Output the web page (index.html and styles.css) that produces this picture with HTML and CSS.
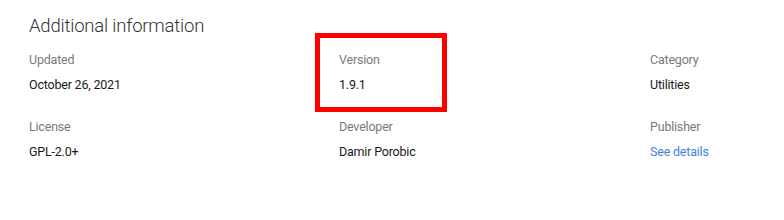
FILE: index.html
```html
<!DOCTYPE html>
<html lang="en">

<head>
	<meta charset="utf-8" />
	<title>Additional information</title>
	<link rel="stylesheet" href="styles.css">
</head>

<body>
	<div class="info">
		<h2 class="title">Additional information</h2>
		<div class="grid">
			<div class="item">
				<div class="label">Updated</div>
				<div class="value">October 26, 2021</div>
			</div>
			<div class="item">
				<div class="label">Version</div>
				<div class="value">1.9.1</div>
			</div>
			<div class="item">
				<div class="label">Category</div>
				<div class="value">Utilities</div>
			</div>
			<div class="item">
				<div class="label">License</div>
				<div class="value">GPL-2.0+</div>
			</div>
			<div class="item">
				<div class="label">Developer</div>
				<div class="value">Damir Porobic</div>
			</div>
			<div class="item">
				<div class="label">Publisher</div>
				<a class="value link" href="#">See details</a>
			</div>
		</div>
		<div class="highlight"></div>
	</div>
</body>

</html>
```

FILE: styles.css
```css
body {
	margin: 0;
	background: #fff;
	font-family: Roboto, sans-serif;
}

.info {
	position: relative;
	padding: 14px 0 0 29px;
}

.title {
	margin: 0;
	font-size: 18.5px;
	font-weight: 300;
	color: #333;
	line-height: 24px;
	letter-spacing: -0.2px;
}

.grid {
	display: grid;
	grid-template-columns: 310px 311px auto;
	row-gap: 24px;
	margin-top: 13px;
}

.label {
	font-size: 12.5px;
	color: #7a7a7a;
	line-height: 18px;
	letter-spacing: -0.2px;
}

.value {
	display: block;
	margin-top: 7px;
	font-size: 12.5px;
	color: #1a1a1a;
	line-height: 18px;
	letter-spacing: -0.2px;
}

.link {
	color: #3f84db;
	text-decoration: none;
}

.highlight {
	position: absolute;
	left: 315px;
	top: 33px;
	width: 122px;
	height: 69px;
	border: 5px solid #ff0000;
}
```
